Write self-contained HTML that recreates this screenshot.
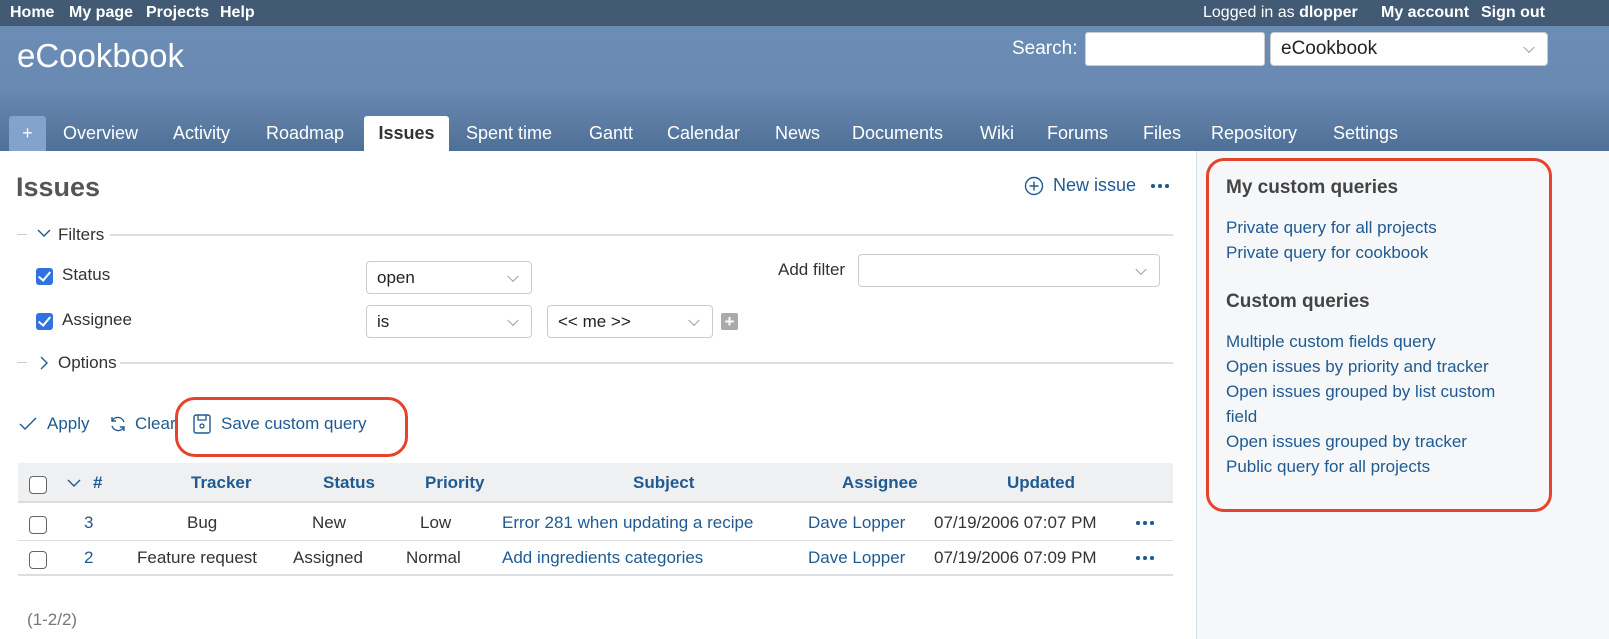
<!DOCTYPE html>
<html><head><meta charset="utf-8"><style>
*{box-sizing:border-box;margin:0;padding:0}
body{width:1609px;height:639px;overflow:hidden;font-family:"Liberation Sans","DejaVu Sans",sans-serif;font-size:17px;color:#333;background:#fff;position:relative}
.a{position:absolute;white-space:nowrap}
a,.l{color:#1f5a92;text-decoration:none}
#top{position:absolute;left:0;top:0;width:1609px;height:26px;background:#435a74;color:#fff;font-weight:bold;font-size:16px}
#hdr{position:absolute;left:0;top:26px;width:1609px;height:125px;background:linear-gradient(#6b8db5,#6989b2 50%,#4f7096)}
.tab{position:absolute;top:116px;height:35px;line-height:35px;color:#fff;font-size:18px;text-align:center}
.inp{position:absolute;background:#fff;border:1px solid #ccc;border-radius:3px}
.sel{position:absolute;background:#fff;border:1px solid #ccc;border-radius:4px;font-size:17px;padding-left:10px;color:#222}
.sel:after{content:"";position:absolute;right:14px;top:50%;width:7px;height:7px;border-right:1.5px solid #999;border-bottom:1.5px solid #999;transform:translateY(-70%) rotate(45deg)}
.cb{position:absolute;width:17px;height:17px;border-radius:3px}
.cb.on{background:#2f72e0}
.cb.on:after{content:"";position:absolute;left:5px;top:1px;width:5px;height:10px;border-right:2.5px solid #fff;border-bottom:2.5px solid #fff;transform:rotate(40deg)}
.cb.off{border:1.5px solid #666;background:#fff;border-radius:4px;width:18px;height:18px}
.th{position:absolute;top:473px;font-weight:bold;color:#1f5a92}
.red{position:absolute;border:3px solid #e5432a}
.dots{position:absolute;width:20px;height:4px}
.dots i{position:absolute;top:0;width:3.5px;height:3.5px;border-radius:50%;background:#1f5a92}
</style></head><body>
<div id="top">
<span class="a" style="left:10px;top:4px">Home</span>
<span class="a" style="left:69px;top:4px">My page</span>
<span class="a" style="left:146px;top:4px">Projects</span>
<span class="a" style="left:220px;top:4px">Help</span>
<span class="a" style="left:1203px;top:4px;font-weight:normal">Logged in as <b>dlopper</b></span>
<span class="a" style="left:1381px;top:4px">My account</span>
<span class="a" style="left:1481px;top:4px">Sign out</span>
</div>
<div id="hdr"></div>
<div class="a" style="left:17px;top:37px;font-size:33px;color:#fff">eCookbook</div>
<div class="a" style="left:1012px;top:38px;font-size:19px;color:#fff">Search:</div>
<div class="inp" style="left:1085px;top:32px;width:180px;height:34px"></div>
<div class="sel" style="left:1270px;top:32px;width:278px;height:34px;line-height:32px;font-size:19px">eCookbook</div>
<div class="tab" style="left:9px;width:37px;background:#84a3cc;border-radius:3px 3px 0 0">+</div>
<div class="tab" style="left:63px">Overview</div>
<div class="tab" style="left:173px">Activity</div>
<div class="tab" style="left:266px">Roadmap</div>
<div class="tab" style="left:364px;width:85px;background:#fff;color:#333;font-weight:bold;border-radius:3px 3px 0 0">Issues</div>
<div class="tab" style="left:466px">Spent time</div>
<div class="tab" style="left:589px">Gantt</div>
<div class="tab" style="left:667px">Calendar</div>
<div class="tab" style="left:775px">News</div>
<div class="tab" style="left:852px">Documents</div>
<div class="tab" style="left:980px">Wiki</div>
<div class="tab" style="left:1047px">Forums</div>
<div class="tab" style="left:1143px">Files</div>
<div class="tab" style="left:1211px">Repository</div>
<div class="tab" style="left:1333px">Settings</div>

<div class="a" style="left:1196px;top:151px;width:413px;height:488px;background:#f5f7f9;border-left:1px solid #d6dde4"></div>
<div class="red" style="left:1206px;top:158px;width:346px;height:354px;border-radius:18px"></div>
<div class="a" style="left:1226px;top:177px;font-size:19px;font-weight:bold;color:#444">My custom queries</div>
<div class="a l" style="left:1226px;top:218px">Private query for all projects</div>
<div class="a l" style="left:1226px;top:243px">Private query for cookbook</div>
<div class="a" style="left:1226px;top:291px;font-size:19px;font-weight:bold;color:#444">Custom queries</div>
<div class="a l" style="left:1226px;top:332px">Multiple custom fields query</div>
<div class="a l" style="left:1226px;top:357px">Open issues by priority and tracker</div>
<div class="a l" style="left:1226px;top:382px">Open issues grouped by list custom</div>
<div class="a l" style="left:1226px;top:407px">field</div>
<div class="a l" style="left:1226px;top:432px">Open issues grouped by tracker</div>
<div class="a l" style="left:1226px;top:457px">Public query for all projects</div>

<div class="a" style="left:16px;top:172px;font-size:27px;font-weight:bold;color:#555">Issues</div>
<svg class="a" style="left:1024px;top:176px" width="20" height="20" viewBox="0 0 20 20"><circle cx="10" cy="10" r="8.5" fill="none" stroke="#1f5a92" stroke-width="1.4"/><path d="M10 5.5v9M5.5 10h9" stroke="#1f5a92" stroke-width="1.4"/></svg>
<div class="a l" style="left:1053px;top:175px;font-size:18px">New issue</div>
<div class="dots" style="left:1151px;top:184px"><i style="left:0"></i><i style="left:7px"></i><i style="left:14px"></i></div>

<div class="a" style="left:17px;top:234px;width:10px;border-top:1px solid #ccc"></div>
<div class="a" style="left:110px;top:234px;width:1063px;border-top:2px solid #dde1e5"></div>
<svg class="a" style="left:37px;top:227px" width="14" height="12"><path d="M1 3l6 6 6-6" fill="none" stroke="#1f5a92" stroke-width="1.4"/></svg>
<div class="a" style="left:58px;top:225px">Filters</div>
<div class="cb on" style="left:36px;top:268px"></div>
<div class="a" style="left:62px;top:265px">Status</div>
<div class="sel" style="left:366px;top:261px;width:166px;height:33px;line-height:32px">open</div>
<div class="a" style="left:778px;top:260px">Add filter</div>
<div class="sel" style="left:858px;top:254px;width:302px;height:33px"></div>
<div class="cb on" style="left:36px;top:313px"></div>
<div class="a" style="left:62px;top:310px">Assignee</div>
<div class="sel" style="left:366px;top:305px;width:166px;height:33px;line-height:32px">is</div>
<div class="sel" style="left:547px;top:305px;width:166px;height:33px;line-height:32px">&lt;&lt; me &gt;&gt;</div>
<div class="a" style="left:721px;top:313px;width:17px;height:17px;background:#aaa;border-radius:2px;color:#fff;font-weight:bold;font-size:17px;line-height:17px;text-align:center">+</div>
<div class="a" style="left:17px;top:362px;width:10px;border-top:1px solid #ccc"></div>
<div class="a" style="left:120px;top:362px;width:1053px;border-top:2px solid #dde1e5"></div>
<svg class="a" style="left:39px;top:356px" width="10" height="14"><path d="M2 1l6 6-6 6" fill="none" stroke="#1f5a92" stroke-width="1.4"/></svg>
<div class="a" style="left:58px;top:353px">Options</div>

<svg class="a" style="left:19px;top:417px" width="18" height="14"><path d="M1 7l5 5 11-11" fill="none" stroke="#1f5a92" stroke-width="1.4"/></svg>
<div class="a l" style="left:47px;top:414px">Apply</div>
<svg class="a" style="left:108px;top:414px" width="20" height="20" viewBox="0 0 20 20"><path d="M16 8a6.5 6.5 0 0 0-12-1M4 3v4h4M4 12a6.5 6.5 0 0 0 12 1M16 17v-4h-4" fill="none" stroke="#1f5a92" stroke-width="1.4"/></svg>
<div class="a l" style="left:135px;top:414px">Clear</div>
<div class="red" style="left:175px;top:397px;width:233px;height:60px;border-radius:20px;background:#fff"></div>
<svg class="a" style="left:193px;top:414px" width="18" height="20" viewBox="0 0 18 20"><rect x="1" y="1" width="16" height="18" rx="2" fill="none" stroke="#1f5a92" stroke-width="1.4"/><path d="M5 1v5h8V1" fill="none" stroke="#1f5a92" stroke-width="1.3"/><circle cx="9" cy="12" r="2" fill="none" stroke="#1f5a92" stroke-width="1.3"/></svg>
<div class="a l" style="left:221px;top:414px">Save custom query</div>

<div class="a" style="left:18px;top:463px;width:1155px;height:40px;background:#eef0f2;border-bottom:2px solid #d9dde1"></div>
<div class="cb off" style="left:29px;top:476px"></div>
<svg class="a" style="left:67px;top:478px" width="14" height="10"><path d="M1 2l6 6 6-6" fill="none" stroke="#1f5a92" stroke-width="1.4"/></svg>
<div class="th" style="left:93px">#</div>
<div class="th" style="left:191px">Tracker</div>
<div class="th" style="left:323px">Status</div>
<div class="th" style="left:425px">Priority</div>
<div class="th" style="left:633px">Subject</div>
<div class="th" style="left:842px">Assignee</div>
<div class="th" style="left:1007px">Updated</div>

<div class="a" style="left:18px;top:540px;width:1155px;border-top:1px solid #dcdfe2"></div>
<div class="a" style="left:18px;top:574px;width:1155px;border-top:2px solid #dcdfe2"></div>
<div class="cb off" style="left:29px;top:516px"></div>
<div class="a l" style="left:84px;top:513px">3</div>
<div class="a" style="left:187px;top:513px">Bug</div>
<div class="a" style="left:312px;top:513px">New</div>
<div class="a" style="left:420px;top:513px">Low</div>
<div class="a l" style="left:502px;top:513px">Error 281 when updating a recipe</div>
<div class="a l" style="left:808px;top:513px">Dave Lopper</div>
<div class="a" style="left:934px;top:513px">07/19/2006 07:07 PM</div>
<div class="dots" style="left:1136px;top:521px"><i style="left:0"></i><i style="left:7px"></i><i style="left:14px"></i></div>
<div class="cb off" style="left:29px;top:551px"></div>
<div class="a l" style="left:84px;top:548px">2</div>
<div class="a" style="left:137px;top:548px">Feature request</div>
<div class="a" style="left:293px;top:548px">Assigned</div>
<div class="a" style="left:406px;top:548px">Normal</div>
<div class="a l" style="left:502px;top:548px">Add ingredients categories</div>
<div class="a l" style="left:808px;top:548px">Dave Lopper</div>
<div class="a" style="left:934px;top:548px">07/19/2006 07:09 PM</div>
<div class="dots" style="left:1136px;top:556px"><i style="left:0"></i><i style="left:7px"></i><i style="left:14px"></i></div>
<div class="a" style="left:27px;top:610px;color:#777">(1-2/2)</div>
</body></html>
